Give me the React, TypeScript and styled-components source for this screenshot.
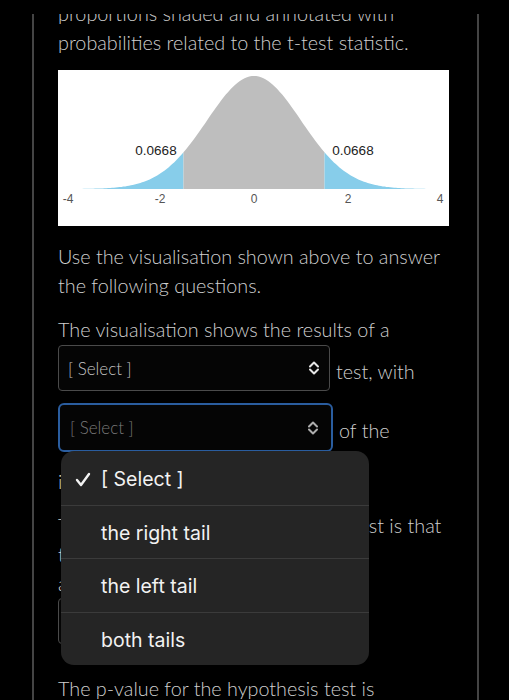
import styled, { createGlobalStyle } from "styled-components";

const GlobalStyle = createGlobalStyle`
  html, body {
    margin: 0;
    padding: 0;
    background: #000;
    overflow: hidden;
  }
`;

// normal curve drawn into the chart box
const X0 = 196;
const UNIT = 47;
const BASE = 119;
const PEAK = 113;

const px = (t: number) => X0 + t * UNIT;
const py = (t: number) => BASE - PEAK * Math.exp((-t * t) / 2);

const areaPath = (from: number, to: number) => {
  const steps = 60;
  let d = `M ${px(from).toFixed(1)} ${BASE}`;
  for (let i = 0; i <= steps; i++) {
    const t = from + ((to - from) * i) / steps;
    d += ` L ${px(t).toFixed(1)} ${py(t).toFixed(1)}`;
  }
  d += ` L ${px(to).toFixed(1)} ${BASE} Z`;
  return d;
};

const ticks = [-4, -2, 0, 2, 4];

const options = ["[ Select ]", "the right tail", "the left tail", "both tails"];

const App = () => {
  return (
    <>
      <GlobalStyle />
      <TopBar />
      <Frame>
        <Content>
          <Para>
            The figure shows a t-distribution with tail
            <br />
            proportions shaded and annotated with
            <br />
            probabilities related to the t-test statistic.
          </Para>
          <Chart>
            <svg width="391" height="156" viewBox="0 0 391 156">
              <path d={areaPath(-3.9, -1.5)} fill="#87cdea" />
              <path d={areaPath(-1.5, 1.5)} fill="#bebebe" />
              <path d={areaPath(1.5, 3.9)} fill="#87cdea" />
              <text x="98" y="85" fontSize="13.5" textAnchor="middle" fill="#222" fontFamily="Liberation Sans, Arial, sans-serif">
                0.0668
              </text>
              <text x="295" y="85" fontSize="13.5" textAnchor="middle" fill="#222" fontFamily="Liberation Sans, Arial, sans-serif">
                0.0668
              </text>
              {ticks.map((t) => (
                <text
                  key={t}
                  x={px(t) + (t === -4 ? 2 : t === 4 ? -2 : 0)}
                  y="133"
                  fontSize="12"
                  textAnchor="middle"
                  fill="#555"
                  fontFamily="Liberation Sans, Arial, sans-serif"
                >
                  {t}
                </text>
              ))}
            </svg>
          </Chart>
          <Para>
            Use the visualisation shown above to answer the following
            questions.
          </Para>
          <Para>The visualisation shows the results of a</Para>
          <BlankRow $gap={1}>
            <SelectBox>
              <span>[ Select ]</span>
              <Chevrons />
            </SelectBox>
            <Trailing>test, with</Trailing>
          </BlankRow>
          <BlankRow $gap={12}>
            <SelectBox $focused>
              <span>[ Select ]</span>
              <Chevrons />
            </SelectBox>
            <Trailing>of the</Trailing>
            <Menu>
              {options.map((o, i) => (
                <MenuItem key={o} $first={i === 0}>
                  <CheckSlot>
                    {i === 0 && (
                      <svg width="16" height="15" viewBox="0 0 16 15">
                        <polyline
                          points="2,8 6,13 14,2"
                          fill="none"
                          stroke="#f2f2f2"
                          strokeWidth="2.4"
                          strokeLinecap="round"
                          strokeLinejoin="round"
                        />
                      </svg>
                    )}
                  </CheckSlot>
                  {o}
                </MenuItem>
              ))}
            </Menu>
          </BlankRow>
          <Line>in the distribution being shaded.</Line>
          <Para>
            The null hypothesis for this paired test is that
            <br />
            the mean difference is zero,
            <br />
            and the alternative is
          </Para>
          <BlankRow $gap={0}>
            <SelectBox>
              <span>[ Select ]</span>
              <Chevrons />
            </SelectBox>
          </BlankRow>
          <Para $top={30}>The p-value for the hypothesis test is</Para>
        </Content>
      </Frame>
    </>
  );
};

const Chevrons = () => (
  <svg width="12" height="16" viewBox="0 0 12 16">
    <polyline points="2,6.5 6,2.5 10,6.5" fill="none" stroke="#e6e6e6" strokeWidth="2" strokeLinecap="round" strokeLinejoin="round" />
    <polyline points="2,9.5 6,13.5 10,9.5" fill="none" stroke="#e6e6e6" strokeWidth="2" strokeLinecap="round" strokeLinejoin="round" />
  </svg>
);

export default App;

const TopBar = styled.div`
  position: fixed;
  top: 0;
  left: 0;
  right: 0;
  height: 14px;
  background: #000;
  z-index: 5;
`;

const Frame = styled.div`
  margin-left: 32px;
  width: 395px;
  min-height: 100vh;
  border-left: 2px solid #444;
  border-right: 2px solid #444;
  padding: 0 24px;
`;

const Content = styled.div`
  width: 391px;
  margin-top: -30px;
  font-family: Lato, "Open Sans", sans-serif;
  font-weight: 300;
  font-size: 19.8px;
  line-height: 29px;
  color: #cfcfcf;
`;

const Para = styled.p<{ $top?: number }>`
  margin: ${(p) => p.$top ?? 15}px 0 0;
  &:first-child {
    margin-top: 0;
  }
`;

const Line = styled.div`
  margin-top: 15px;
`;

const Chart = styled.div`
  margin: 13px 0 16px;
  height: 156px;
  background: #fff;
  svg {
    display: block;
  }
`;

const BlankRow = styled.div<{ $gap?: number }>`
  position: relative;
  display: flex;
  align-items: center;
  gap: 6px;
  margin-top: ${(p) => p.$gap ?? 0}px;
`;

const SelectBox = styled.div<{ $focused?: boolean }>`
  box-sizing: border-box;
  display: flex;
  align-items: center;
  justify-content: space-between;
  width: ${(p) => (p.$focused ? 275 : 272)}px;
  height: ${(p) => (p.$focused ? 49 : 46)}px;
  padding: 0 ${(p) => (p.$focused ? 12 : 9)}px 0 ${(p) => (p.$focused ? 10 : 9)}px;
  border: ${(p) => (p.$focused ? "2.5px solid #2a5d9f" : "1px solid #4a4a4a")};
  border-radius: ${(p) => (p.$focused ? 6 : 4)}px;
  background: #050505;
  font-size: 17px;
  color: ${(p) => (p.$focused ? "#7a7a7a" : "#c4c4c4")};
  svg {
    opacity: ${(p) => (p.$focused ? 0.75 : 1)};
  }
`;

const Trailing = styled.span`
  padding-top: 6px;
`;

const Menu = styled.div`
  position: absolute;
  top: 48px;
  left: 3px;
  z-index: 2;
  width: 308px;
  background: #252525;
  border-radius: 13px;
  overflow: hidden;
  font-family: Inter, "Noto Sans", sans-serif;
  font-weight: 400;
  font-size: 19.5px;
  color: #f2f2f2;
`;

const MenuItem = styled.div<{ $first?: boolean }>`
  box-sizing: border-box;
  display: flex;
  align-items: center;
  height: 53.5px;
  padding: 3px 0 0 14px;
  border-top: ${(p) => (p.$first ? "none" : "1px solid #3b3b3b")};
`;

const CheckSlot = styled.span`
  display: flex;
  align-items: center;
  width: 26px;
  svg {
    display: block;
  }
`;
